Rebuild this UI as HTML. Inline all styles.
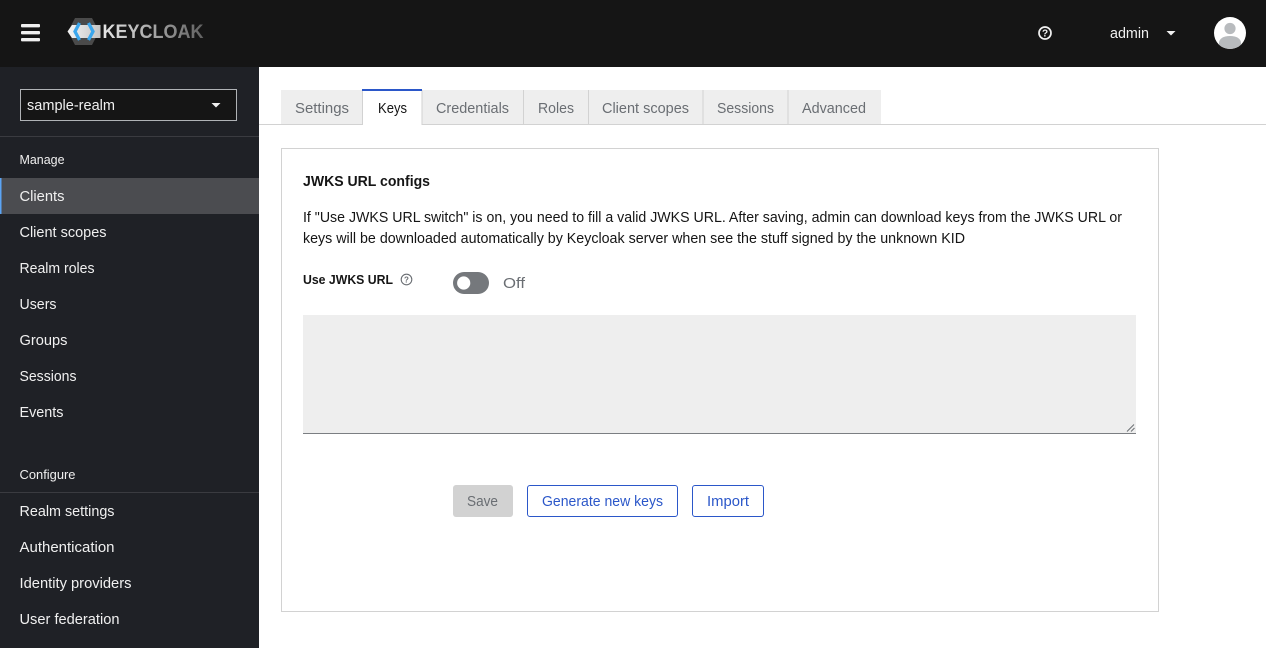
<!DOCTYPE html>
<html lang="en">
<head>
<meta charset="utf-8">
<title>Keycloak - Client Keys</title>
<style>
html,body{margin:0;padding:0;width:1266px;height:648px;overflow:hidden;background:#fff}
svg{display:block}
text{font-family:"Liberation Sans",sans-serif;font-size:14.5px;white-space:pre}
.n{fill:#f0f0f0}
.t{fill:#6a6e73}
.b{fill:#2b57c9}
</style>
</head>
<body>
<svg xmlns="http://www.w3.org/2000/svg" width="1266" height="648" viewBox="0 0 1266 648">
<defs>
<linearGradient id="lg" x1="0" x2="1" y1="0" y2="0"><stop offset="0" stop-color="#f4f4f4"/><stop offset="1" stop-color="#c4c4c4"/></linearGradient>
<linearGradient id="tg" gradientUnits="userSpaceOnUse" x1="102" x2="204" y1="0" y2="0"><stop offset="0" stop-color="#e6e6e6"/><stop offset="0.4" stop-color="#b4b4b4"/><stop offset="1" stop-color="#606060"/></linearGradient>
</defs>
<rect width="1266" height="648" fill="#fff"/>

<!-- header -->
<rect width="1266" height="67" fill="#151515"/>
<g fill="#f0f0f0">
<rect x="21" y="24" width="19" height="3.4" rx="1"/>
<rect x="21" y="31" width="19" height="3.4" rx="1"/>
<rect x="21" y="38" width="19" height="3.4" rx="1"/>
</g>
<polygon points="75,18 92,18 99,31.5 92,45 75,45 68,31.5" fill="#4a4a4a"/>
<polygon points="72,25 100.5,25 100.5,38 72,38 67.5,31.5" fill="url(#lg)"/>
<g fill="none" stroke="#3aa6ec" stroke-width="3.3">
<polyline points="79.5,23 75,31.5 79.5,40"/>
<polyline points="88.5,23 93,31.5 88.5,40"/>
</g>
<text x="102.5" y="38" font-weight="700" style="font-size:19px" fill="url(#tg)" textLength="101" lengthAdjust="spacingAndGlyphs">KEYCLOAK</text>

<circle cx="1045" cy="33" r="6" fill="none" stroke="#f0f0f0" stroke-width="1.7"/>
<text x="1045" y="36.6" text-anchor="middle" font-weight="700" style="font-size:10px" fill="#f0f0f0">?</text>
<text x="1110" y="38" class="n" textLength="39" lengthAdjust="spacingAndGlyphs">admin</text>
<polygon points="1166.5,31 1175.5,31 1171,35.5" fill="#f0f0f0"/>
<clipPath id="av"><circle cx="1230" cy="33" r="16"/></clipPath>
<circle cx="1230" cy="33" r="16" fill="#fff"/>
<g clip-path="url(#av)" fill="#b8bbbe">
<circle cx="1230" cy="28.5" r="5.6"/>
<path d="M1219 49v-6c0-4 4-7 11-7s11 3 11 7v6z"/>
</g>

<!-- sidebar -->
<rect x="0" y="67" width="259" height="581" fill="#1f2126"/>
<rect x="20.5" y="89.5" width="216" height="31" fill="#151515" stroke="#b0b3b6"/>
<text x="27" y="110" class="n" textLength="88" lengthAdjust="spacingAndGlyphs">sample-realm</text>
<polygon points="211.5,103 220.5,103 216,107.5" fill="#f0f0f0"/>
<rect x="0" y="136" width="259" height="1" fill="#3a3b40"/>
<text x="19.5" y="164" class="n" style="font-size:13px" textLength="45" lengthAdjust="spacingAndGlyphs">Manage</text>
<rect x="0" y="178" width="259" height="36" fill="#4b4c50"/>
<rect x="0" y="178" width="1.5" height="36" fill="#5ba4f5"/>
<text x="19.5" y="201" class="n" textLength="45" lengthAdjust="spacingAndGlyphs">Clients</text>
<text x="19.5" y="237" class="n" textLength="87" lengthAdjust="spacingAndGlyphs">Client scopes</text>
<text x="19.5" y="273" class="n" textLength="75" lengthAdjust="spacingAndGlyphs">Realm roles</text>
<text x="19.5" y="309" class="n" textLength="37" lengthAdjust="spacingAndGlyphs">Users</text>
<text x="19.5" y="345" class="n" textLength="48" lengthAdjust="spacingAndGlyphs">Groups</text>
<text x="19.5" y="381" class="n" textLength="57" lengthAdjust="spacingAndGlyphs">Sessions</text>
<text x="19.5" y="417" class="n" textLength="44" lengthAdjust="spacingAndGlyphs">Events</text>
<text x="19.5" y="479" class="n" style="font-size:13px" textLength="56" lengthAdjust="spacingAndGlyphs">Configure</text>
<rect x="0" y="492" width="259" height="1" fill="#3a3b40"/>
<text x="19.5" y="516" class="n" textLength="95" lengthAdjust="spacingAndGlyphs">Realm settings</text>
<text x="19.5" y="552" class="n" textLength="95" lengthAdjust="spacingAndGlyphs">Authentication</text>
<text x="19.5" y="588" class="n" textLength="112" lengthAdjust="spacingAndGlyphs">Identity providers</text>
<text x="19.5" y="624" class="n" textLength="100" lengthAdjust="spacingAndGlyphs">User federation</text>

<!-- tabs -->
<rect x="259" y="124" width="1007" height="1" fill="#d2d2d2"/>
<rect x="281" y="90" width="81" height="34" fill="#eeeeee"/>
<rect x="422" y="90" width="459" height="34" fill="#eeeeee"/>
<g fill="#d2d2d2">
<rect x="362" y="90" width="1" height="35"/>
<rect x="421.5" y="90" width="1" height="35"/>
<rect x="523" y="90" width="1" height="35"/>
<rect x="588" y="90" width="1" height="35"/>
<rect x="702.5" y="90" width="1" height="35"/>
<rect x="787.5" y="90" width="1" height="35"/>
</g>
<rect x="363" y="91" width="58.5" height="34" fill="#fff"/>
<rect x="362" y="89" width="60" height="2" fill="#2b57c9"/>
<text x="295" y="113" class="t" textLength="54" lengthAdjust="spacingAndGlyphs">Settings</text>
<text x="378" y="113" fill="#151515" textLength="29" lengthAdjust="spacingAndGlyphs">Keys</text>
<text x="436" y="113" class="t" textLength="73" lengthAdjust="spacingAndGlyphs">Credentials</text>
<text x="538" y="113" class="t" textLength="36" lengthAdjust="spacingAndGlyphs">Roles</text>
<text x="602" y="113" class="t" textLength="87" lengthAdjust="spacingAndGlyphs">Client scopes</text>
<text x="717" y="113" class="t" textLength="57" lengthAdjust="spacingAndGlyphs">Sessions</text>
<text x="802" y="113" class="t" textLength="64" lengthAdjust="spacingAndGlyphs">Advanced</text>

<!-- card -->
<rect x="281.5" y="148.5" width="877" height="463" fill="#fff" stroke="#d2d2d2"/>
<text x="303" y="186" font-weight="700" fill="#151515" textLength="127" lengthAdjust="spacingAndGlyphs">JWKS URL configs</text>
<text x="303" y="222" fill="#151515" textLength="819" lengthAdjust="spacingAndGlyphs">If "Use JWKS URL switch" is on, you need to fill a valid JWKS URL. After saving, admin can download keys from the JWKS URL or</text>
<text x="303" y="243" fill="#151515" textLength="662" lengthAdjust="spacingAndGlyphs">keys will be downloaded automatically by Keycloak server when see the stuff signed by the unknown KID</text>

<text x="303" y="284" font-weight="700" fill="#151515" style="font-size:12.5px" textLength="90" lengthAdjust="spacingAndGlyphs">Use JWKS URL</text>
<circle cx="406.5" cy="279.5" r="5.3" fill="none" stroke="#6a6e73" stroke-width="1.1"/>
<text x="406.5" y="282.6" text-anchor="middle" fill="#6a6e73" font-weight="700" style="font-size:8px">?</text>

<rect x="453" y="272" width="36" height="22" rx="11" fill="#75787c"/>
<circle cx="463.7" cy="283" r="6.6" fill="#fff"/>
<text x="503" y="288" class="t" textLength="22" lengthAdjust="spacingAndGlyphs">Off</text>

<rect x="303" y="315" width="833" height="119" fill="#eeeeee"/>
<rect x="303" y="433" width="833" height="1" fill="#7b7e82"/>
<g stroke="#6a6e73" stroke-width="1">
<line x1="1127" y1="431.5" x2="1134" y2="424.5"/>
<line x1="1131" y1="431.5" x2="1134.5" y2="428"/>
</g>

<!-- buttons -->
<rect x="453" y="485" width="60" height="32" rx="3" fill="#d2d2d2"/>
<text x="467" y="506" class="t" textLength="31" lengthAdjust="spacingAndGlyphs">Save</text>
<rect x="527.5" y="485.5" width="150" height="31" rx="2.5" fill="#fff" stroke="#2b57c9"/>
<text x="542" y="506" class="b" textLength="121" lengthAdjust="spacingAndGlyphs">Generate new keys</text>
<rect x="692.5" y="485.5" width="71" height="31" rx="2.5" fill="#fff" stroke="#2b57c9"/>
<text x="707" y="506" class="b" textLength="42" lengthAdjust="spacingAndGlyphs">Import</text>
</svg>
</body>
</html>
